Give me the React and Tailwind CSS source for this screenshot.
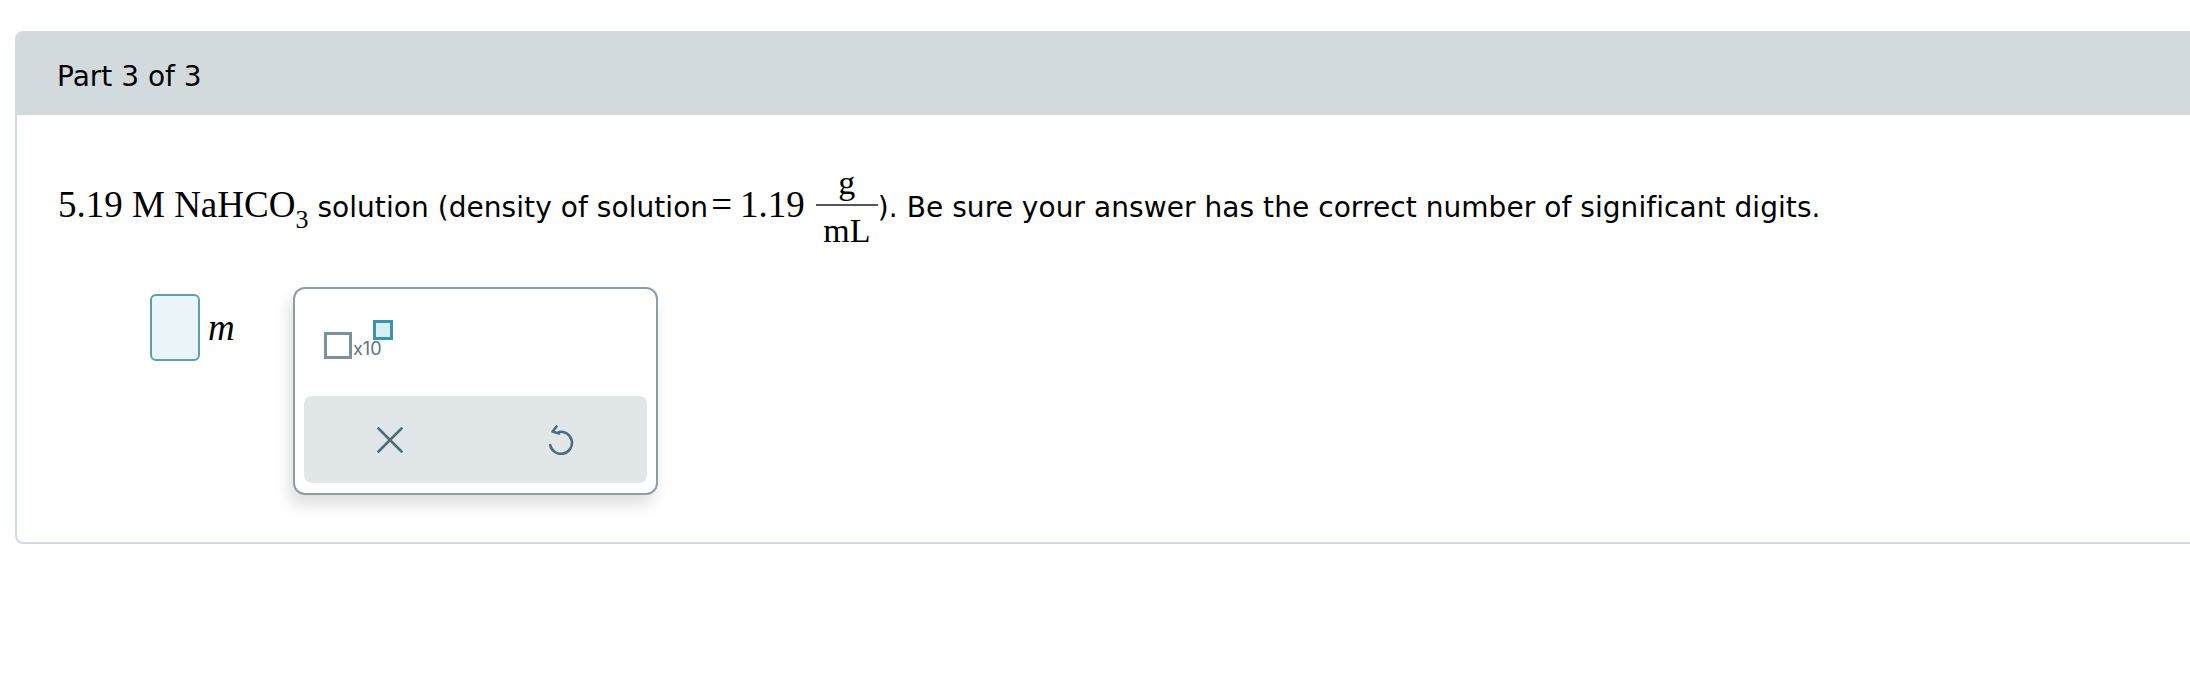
import React from "react";

const serif = "font-['Liberation_Serif','Times_New_Roman',serif]";

const Fraction = () => (
  <span className={`inline-block align-[-25px] w-[62px] text-center ${serif} text-[34px]`}>
    <span className="block leading-[30px]">g</span>
    <span className="block h-[2px] bg-[#555] mt-[6px] mb-[8px]" />
    <span className="block leading-[34px]">mL</span>
  </span>
);

const UndoIcon = () => (
  <svg width="30" height="30" viewBox="0 0 30 30" fill="none" stroke="#4c6e7b" strokeWidth="2.6" strokeLinecap="round" strokeLinejoin="round">
    <path d="M13 7A11 11 0 1 1 4.2 20" />
    <path d="M10.5 1.5 6.5 6.5 13 8.5" />
  </svg>
);

const CloseIcon = () => (
  <svg width="26" height="26" viewBox="0 0 26 26" fill="none" stroke="#4c6e7b" strokeWidth="2.6" strokeLinecap="round">
    <path d="M1.5 1.5l23 23M24.5 1.5l-23 23" />
  </svg>
);

export default function App() {
  return (
    <div className="w-full min-h-[696px] overflow-hidden bg-white pt-[31px] pl-[15px] font-['DejaVu_Sans','Verdana',sans-serif] text-black">
      <div className="w-[2200px] border-2 border-[#d3dade] rounded-l-[8px] bg-white overflow-hidden">
        {/* Header */}
        <div className="h-[82px] bg-[#d3dade] flex items-center pl-[40px] pt-[5px] text-[28px]">
          Part 3 of 3
        </div>

        {/* Body */}
        <div className="pl-[41px] pb-[47px]">
          <p className="pt-[53px] text-[28px] leading-[40px] whitespace-nowrap tracking-[0.06px]">
            <span className={`${serif} text-[37px] tracking-normal`}>
              5.19 M NaHCO<span className="text-[26px] align-[-11px]">3</span>
            </span>{" "}
            solution (density of solution
            <span className={`${serif} text-[37px] tracking-normal`}>
              <span className="ml-[3px] mr-[8px]">=</span>1.19
            </span>
            <span className="ml-[11px]">
              <Fraction />
            </span>
            ). Be sure your answer has the correct number of significant digits.
          </p>

          <div className="mt-[39px] flex items-start pl-[92px]">
            {/* answer input */}
            <div className="w-[143px] mt-[7px] flex items-center">
              <div className="w-[50px] h-[67px] rounded-[6px] border-2 border-[#5e9eae] bg-[#e9f5f9]" />
              <span className={`ml-[8px] ${serif} italic text-[37px] leading-[36px]`}>m</span>
            </div>

            {/* keypad */}
            <div className="w-[365px] h-[208px] border-2 border-[#8aa0a9] rounded-[12px] bg-white shadow-[-4px_10px_16px_rgba(0,0,0,0.13)] px-[9px] pb-[10px] flex flex-col">
              <div className="h-[107px] pl-[20px] pt-[31px] flex items-start">
                <div className="mt-[12px] w-[28px] h-[27px] border-[3px] border-[#7a929c]" />
                <span className="mt-[19px] ml-[1px] font-['Inter',sans-serif] text-[18px] leading-[19px] text-[#5a7480]">x10</span>
                <div className="ml-[-9px] w-[20px] h-[20px] border-[3px] border-[#3b93ae] bg-[#d6eef5]" />
              </div>
              <div className="flex-1 rounded-[8px] bg-[#e1e6e9] grid grid-cols-2">
                <div className="flex items-center justify-center">
                  <CloseIcon />
                </div>
                <div className="flex items-center justify-center">
                  <UndoIcon />
                </div>
              </div>
            </div>
          </div>
        </div>
      </div>
    </div>
  );
}
